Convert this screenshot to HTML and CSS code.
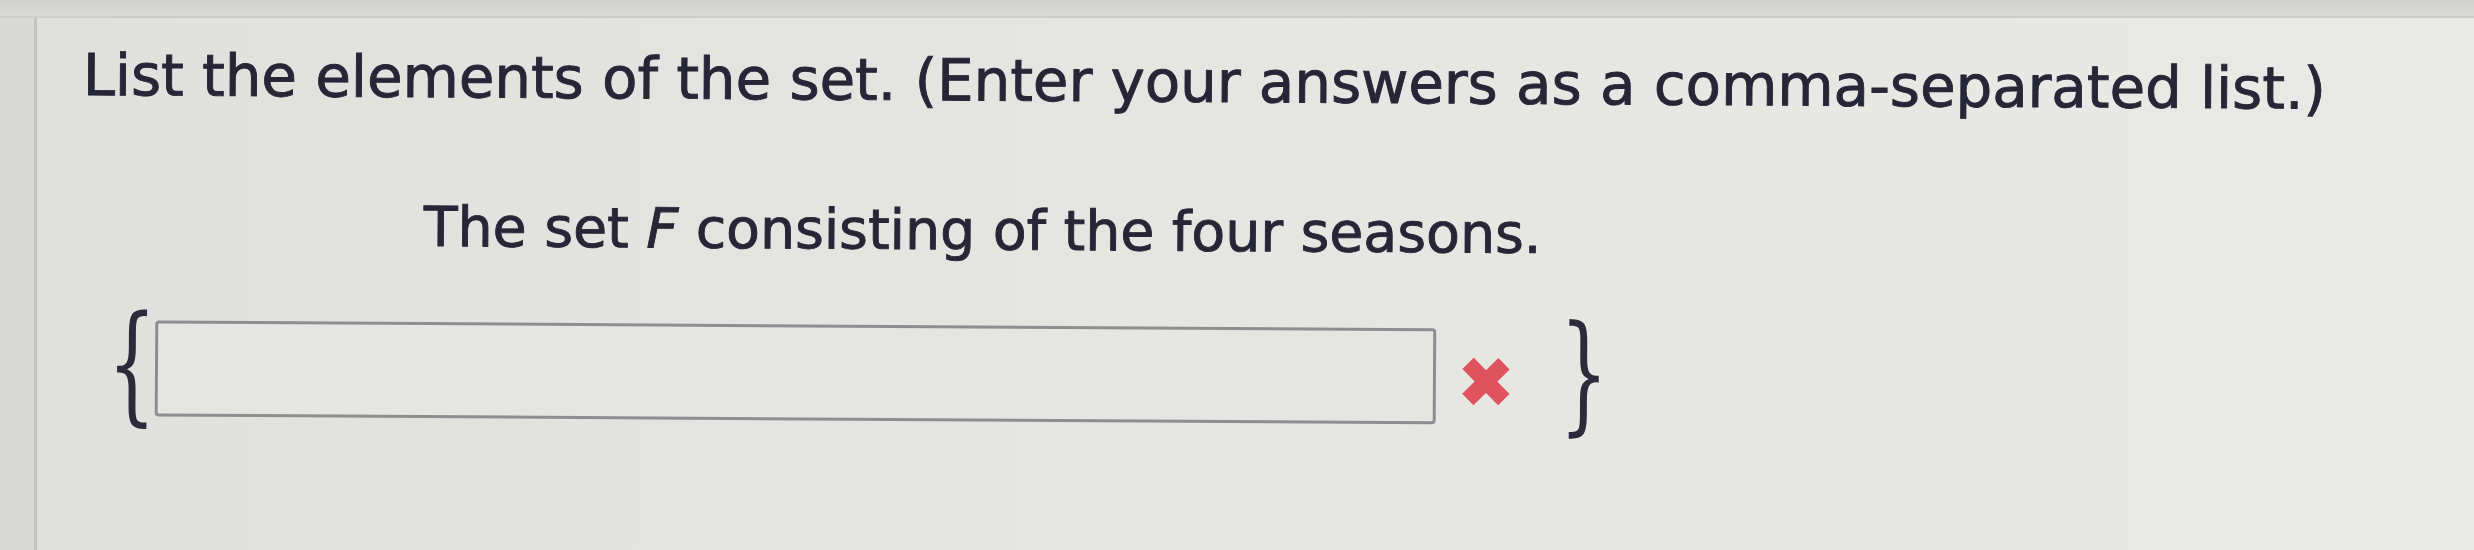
FILE: index.html
```html
<!DOCTYPE html>
<html lang="en">
<head>
<meta charset="utf-8">
<title>Set question</title>
<link rel="stylesheet" href="styles.css">
</head>
<body>
<div class="page">
  <div class="topbar"></div>
  <div class="panel">
    <div class="content">
      <p class="prompt">List the elements of the set. (Enter your answers as a comma-separated list.)</p>
      <p class="question">The set <i>F</i> consisting of the four seasons.</p>
      <div class="answer">
        <span class="brace">{</span>
        <div class="input"></div>
        <svg class="mark" viewBox="0 0 60 60" width="60" height="60" aria-label="incorrect">
          <path d="M12 12 L48 48 M48 12 L12 48" stroke="#e0525e" stroke-width="16" stroke-linecap="butt"/>
        </svg>
        <span class="brace close">}</span>
      </div>
    </div>
  </div>
</div>
</body>
</html>
```
FILE: styles.css
```css
html, body {
  margin: 0;
  padding: 0;
}
body {
  width: 2474px;
  height: 550px;
  overflow: hidden;
  background: #d8d8d5;
  font-family: "DejaVu Sans", Verdana, sans-serif;
  color: #262636;
}
.page {
  display: flex;
  flex-direction: column;
  height: 550px;
}
.topbar {
  height: 16px;
  background: linear-gradient(#d0d0ce, #d9d9d7);
  border-bottom: 2px solid #cdcdca;
}
.panel {
  flex: 1;
  margin-left: 34px;
  border-left: 3px solid #c2c2bf;
  background: linear-gradient(90deg, #e0e0dd 0%, #e5e5e2 45%, #e9e9e6 100%);
  padding: 0 0 0 46px;
}
.content {
  transform: rotate(0.35deg);
  transform-origin: 0 0;
}
.prompt {
  margin: 22px 0 0 0;
  font-size: 57.8px;
  line-height: 70px;
  -webkit-text-stroke: 0.9px #262636;
  white-space: nowrap;
}
.question {
  margin: 80px 0 0 342px;
  font-size: 55.3px;
  line-height: 70px;
  -webkit-text-stroke: 0.9px #262636;
  white-space: nowrap;
}
.question i {
  font-style: oblique;
}
.answer {
  display: flex;
  align-items: center;
  margin: 43px 0 0 33px;
  height: 130px;
}
.brace {
  display: flex;
  justify-content: center;
  width: 36px;
  font-family: "DejaVu Serif", serif;
  font-size: 96px;
  line-height: 96px;
  color: #2b2b3a;
  transform: scaleX(0.8) scaleY(1.35);
  margin-top: -10px;
}
.input {
  box-sizing: border-box;
  width: 1281px;
  height: 96px;
  margin-left: 5px;
  border: 3px solid #8e8e90;
  border-radius: 4px;
  background: #e5e5e2;
}
.mark {
  margin-left: 20px;
  width: 60px;
  height: 60px;
  margin-top: 10px;
}
.brace.close {
  margin-left: 50px;
  margin-top: -8px;
}
```
